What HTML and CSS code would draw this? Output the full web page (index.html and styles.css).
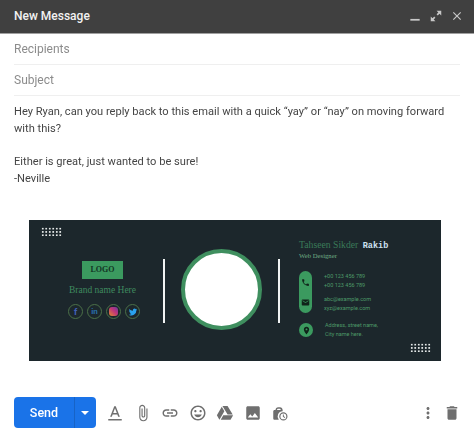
FILE: index.html

```html
<!DOCTYPE html>
<html lang="en">
<head>
  <meta charset="UTF-8" />
  <title>New Message</title>
  <link rel="stylesheet" href="styles.css">
</head>
<body>
  <div class="compose">
    <header class="title-bar">
      <span class="title">New Message</span>
      <div class="window-icons">
        <svg viewBox="0 0 24 24"><path d="M4 17h16v3H4z"/></svg>
        <svg viewBox="0 0 24 24"><path d="M21 3v8l-3-3-3 3-2-2 3-3-3-3zM3 21v-8l3 3 3-3 2 2-3 3 3 3z"/></svg>
        <svg viewBox="0 0 24 24"><path d="M19 6.41L17.59 5 12 10.59 6.41 5 5 6.41 10.59 12 5 17.59 6.41 19 12 13.41 17.59 19 19 17.59 13.41 12z"/></svg>
      </div>
    </header>

    <div class="field">Recipients</div>
    <div class="field">Subject</div>

    <div class="message">
      <p>Hey Ryan, can you reply back to this email with a quick “yay” or “nay” on moving forward with this?</p>
      <p>Either is great, just wanted to be sure!<br>-Neville</p>
    </div>

    <div class="signature">
      <span class="dots dots-top"></span>
      <div class="brand">
        <div class="logo">LOGO</div>
        <div class="brand-name">Brand name Here</div>
        <div class="socials">
          <span class="social fb">f</span>
          <span class="social in">in</span>
          <span class="social ig"></span>
          <span class="social tw">
            <svg viewBox="0 0 24 24"><path d="M22 5.9c-.7.3-1.500.5-2.400.6.9-.5 1.500-1.300 1.800-2.300-.8.5-1.700.8-2.600 1a4.100 4.100 0 0 0-7 3.700C8.400 8.800 5.400 7.200 3.400 4.700a4.100 4.100 0 0 0 1.300 5.500c-.7 0-1.300-.2-1.900-.5 0 2 1.400 3.700 3.300 4.100-.6.2-1.200.2-1.800.1.500 1.600 2 2.800 3.800 2.800A8.200 8.200 0 0 1 2 18.400 11.600 11.600 0 0 0 20 8.100c.8-.6 1.500-1.300 2-2.200z"/></svg>
          </span>
        </div>
      </div>
      <span class="rule"></span>
      <div class="photo"></div>
      <span class="rule"></span>
      <div class="person">
        <div class="name">Tahseen Sikder <b>Rakib</b></div>
        <div class="job">Web Designer</div>
        <div class="contact">
          <div class="pill">
            <svg viewBox="0 0 24 24"><path d="M6.620 10.790c1.440 2.830 3.760 5.140 6.590 6.590l2.200-2.200c.27-.27.67-.36 1.020-.24 1.120.37 2.330.57 3.570.57.55 0 1 .45 1 1V20c0 .55-.45 1-1 1-9.390 0-17-7.610-17-17 0-.55.45-1 1-1h3.500c.55 0 1 .45 1 1 0 1.250.2 2.450.57 3.570.11.35.03.74-.25 1.020l-2.200 2.200z"/></svg>
            <svg viewBox="0 0 24 24"><path d="M20 4H4c-1.100 0-2 .9-2 2v12c0 1.100.9 2 2 2h16c1.100 0 2-.9 2-2V6c0-1.100-.9-2-2-2zm0 4l-8 5-8-5V6l8 5 8-5v2z"/></svg>
          </div>
          <div class="contact-text">
            <p>+00 123 456 789<br>+00 123 456 789</p>
            <p>abc@example.com<br>xyz@example.com</p>
          </div>
        </div>
        <div class="contact address">
          <div class="pin">
            <svg viewBox="0 0 24 24"><path d="M12 2C8.130 2 5 5.130 5 9c0 5.250 7 13 7 13s7-7.750 7-13c0-3.870-3.130-7-7-7zm0 9.500c-1.380 0-2.500-1.120-2.500-2.500s1.120-2.500 2.500-2.500 2.500 1.120 2.500 2.500-1.120 2.500-2.500 2.500z"/></svg>
          </div>
          <div class="contact-text">Address, street name,<br>City name here.</div>
        </div>
      </div>
      <span class="dots dots-bottom"></span>
    </div>

    <footer class="toolbar">
      <div class="send">
        <span class="send-label">Send</span>
        <span class="send-more"></span>
      </div>
      <div class="tools">
        <svg viewBox="0 0 24 24"><path d="M11 3L5.500 17h2.250l1.120-3h6.250l1.120 3h2.250L13 3h-2zm-1.380 9L12 5.670 14.380 12H9.620zM3 20h18v2H3z"/></svg>
        <svg viewBox="0 0 24 24"><path d="M16.500 6v11.500c0 2.210-1.790 4-4 4s-4-1.790-4-4V5c0-1.380 1.120-2.500 2.500-2.500s2.500 1.120 2.500 2.500v10.500c0 .55-.45 1-1 1s-1-.45-1-1V6H10v9.500c0 1.380 1.120 2.500 2.500 2.500s2.500-1.120 2.500-2.500V5c0-2.210-1.790-4-4-4S7 2.790 7 5v12.500c0 3.040 2.460 5.500 5.500 5.500s5.500-2.460 5.500-5.500V6h-1.500z"/></svg>
        <svg viewBox="0 0 24 24"><path d="M3.900 12c0-1.710 1.390-3.100 3.100-3.100h4V7H7c-2.760 0-5 2.240-5 5s2.240 5 5 5h4v-1.900H7c-1.710 0-3.100-1.390-3.100-3.100zM8 13h8v-2H8v2zm9-6h-4v1.900h4c1.710 0 3.100 1.390 3.100 3.100s-1.390 3.100-3.100 3.100h-4V17h4c2.760 0 5-2.240 5-5s-2.240-5-5-5z"/></svg>
        <svg viewBox="0 0 24 24"><path d="M11.990 2C6.470 2 2 6.480 2 12s4.470 10 9.990 10C17.520 22 22 17.520 22 12S17.520 2 11.990 2zM12 20c-4.420 0-8-3.580-8-8s3.580-8 8-8 8 3.580 8 8-3.580 8-8 8zm3.500-9c.83 0 1.500-.67 1.500-1.500S16.330 8 15.500 8 14 8.670 14 9.500s.67 1.500 1.500 1.500zm-7 0c.83 0 1.500-.67 1.500-1.500S9.330 8 8.500 8 7 8.670 7 9.500 7.670 11 8.500 11zm3.500 6.500c2.330 0 4.310-1.460 5.110-3.500H6.890c.8 2.040 2.780 3.500 5.110 3.500z"/></svg>
        <svg viewBox="0 0 24 24"><path d="M7.710 3.500L1.150 15l3.430 6 6.550-11.500zM9.730 15L6.300 21h13.120l3.430-6zM22.280 14L15.420 2.500H8.570L15.430 14z"/></svg>
        <svg viewBox="0 0 24 24"><path d="M21 19V5c0-1.100-.9-2-2-2H5c-1.100 0-2 .9-2 2v14c0 1.100.9 2 2 2h14c1.100 0 2-.9 2-2zM8.500 13.500l2.500 3.010L14.500 12l4.500 6H5l3.500-4.500z"/></svg>
        <svg viewBox="0 0 24 24"><path d="M15.500 9.600V8c0-2-1.600-3.600-3.500-3.600H9.500C7.600 4.400 6 6 6 8H4.800C3.800 8 3 8.800 3 9.800v9.400c0 1 .8 1.800 1.800 1.800h5.600a7 7 0 0 1 5.100-11.400zM8 8c0-1 .8-1.700 1.700-1.700h1.600c.9 0 1.700.7 1.700 1.700zM16.500 11a5.500 5.500 0 1 0 0 11 5.500 5.500 0 0 0 0-11zm0 9.400a3.900 3.900 0 1 1 0-7.800 3.900 3.900 0 0 1 0 7.800zm.6-6.500h-1.300v3.100l2.600 1.500.6-1-1.900-1.100z"/></svg>
      </div>
      <div class="tools tools-right">
        <svg viewBox="0 0 24 24"><path d="M12 8c1.100 0 2-.9 2-2s-.9-2-2-2-2 .9-2 2 .9 2 2 2zm0 2c-1.100 0-2 .9-2 2s.9 2 2 2 2-.9 2-2-.9-2-2-2zm0 6c-1.100 0-2 .9-2 2s.9 2 2 2 2-.9 2-2-.9-2-2-2z"/></svg>
        <svg viewBox="0 0 24 24"><path d="M6 19c0 1.100.9 2 2 2h8c1.100 0 2-.9 2-2V7H6v12zM19 4h-3.500l-1-1h-5l-1 1H5v2h14V4z"/></svg>
      </div>
    </footer>
  </div>
</body>
</html>
```

FILE: styles.css

```css
* { box-sizing: border-box; margin: 0; padding: 0; }
body { background-color: #fff; font-family: Roboto, Arial, sans-serif; color: #444; }
svg { display: block; fill: currentColor; }

.compose {
  display: flex;
  flex-direction: column;
  height: 438px;
  overflow: hidden;
  filter: blur(0.4px);
}

.title-bar {
  display: flex;
  justify-content: space-between;
  align-items: center;
  height: 34px;
  padding: 0 10px 2px 14px;
  background-color: #404040;
  border-bottom: 1px solid #a0a0a0;
  color: #f2f2f2;
}
.title { font-size: 12px; font-weight: 500; }
.window-icons { display: flex; gap: 7px; color: #c8c8c8; }
.window-icons svg { width: 14px; height: 14px; }

.field {
  height: 31px;
  margin: 0 14px;
  padding-top: 8px;
  border-bottom: 1px solid #efefef;
  font-size: 12px;
  color: #8c8c8c;
}

.message {
  padding: 8px 14px 0;
  font-size: 11.1px;
  line-height: 16.7px;
  color: #454545;
}
.message p { margin-bottom: 16.7px; }

.signature {
  position: relative;
  display: flex;
  align-items: center;
  width: 412px;
  height: 141px;
  margin: 16px 0 0 29px;
  background-color: #1c272c;
  flex-shrink: 0;
}
.dots {
  position: absolute;
  width: 21px;
  height: 10px;
  background-image: radial-gradient(circle, #e4e8e8 0.9px, transparent 1.1px);
  background-size: 3.5px 3.3px;
}
.dots-top { top: 7px; left: 12px; }
.dots-bottom { bottom: 8px; right: 10px; }

.brand {
  display: flex;
  flex-direction: column;
  align-items: center;
  width: 134px;
  padding-left: 13px;
  margin-top: -1px;
}
.logo {
  width: 41px;
  height: 18px;
  background-color: #3b9a5f;
  font-family: "Liberation Serif", serif;
  font-size: 8px;
  font-weight: bold;
  line-height: 18px;
  text-align: center;
  color: #123524;
}
.brand-name {
  margin-top: 6px;
  font-family: "Liberation Serif", serif;
  font-size: 9.5px;
  color: #3f8a5f;
}
.socials { display: flex; gap: 4px; margin: 9px 0 0 3px; }
.social {
  display: flex;
  justify-content: center;
  align-items: center;
  width: 15px;
  height: 15px;
  border: 1px solid #4b7048;
  border-radius: 50%;
  font-size: 8px;
  font-weight: bold;
}
.fb { color: #4360b8; font-size: 9px; }
.in { color: #2a6fa8; }
.ig::after {
  content: "";
  width: 9px;
  height: 9px;
  border-radius: 3px;
  background: linear-gradient(45deg, #e08a2e, #c0357a 55%, #6a3aa0);
}
.tw { color: #2aa3ee; }
.tw svg { width: 10px; height: 10px; }

.rule {
  width: 2px;
  height: 64px;
  background-color: #f0f3f3;
  flex-shrink: 0;
}

.photo {
  width: 81px;
  height: 81px;
  margin: -3px 16px 0 16px;
  background-color: #fff;
  border: 4px solid #3f8f5f;
  border-radius: 50%;
  flex-shrink: 0;
}

.person { align-self: flex-start; margin-left: 19px; padding-top: 19px; }
.name {
  font-family: "Liberation Serif", serif;
  font-size: 9.7px;
  color: #3a7a58;
  white-space: nowrap;
}
.name b {
  margin-left: 2px;
  font-family: "Liberation Mono", monospace;
  font-size: 8.5px;
  color: #cfe2f2;
}
.job {
  margin-top: 1px;
  font-family: "Liberation Serif", serif;
  font-size: 6.7px;
  color: #6fae85;
}
.contact {
  display: flex;
  align-items: center;
  gap: 12px;
  margin-top: 12px;
  font-size: 5.5px;
  color: #4d9a68;
}
.contact.address { margin-top: 8px; }
.contact-text { line-height: 9px; white-space: nowrap; }
.contact-text p + p { margin-top: 5px; }
.pill {
  display: flex;
  flex-direction: column;
  justify-content: space-between;
  align-items: center;
  width: 13px;
  height: 42px;
  padding: 7px 0 6px;
  background-color: #3b9a5f;
  border-radius: 7px;
  color: #10231a;
}
.pill svg { width: 9px; height: 9px; }
.pin {
  display: flex;
  justify-content: center;
  align-items: center;
  width: 14px;
  height: 14px;
  background-color: #3b9a5f;
  border-radius: 50%;
  color: #10231a;
}
.pin svg { width: 9px; height: 9px; }

.toolbar {
  display: flex;
  align-items: center;
  margin-top: 36px;
  padding: 0 13px 0 14px;
}
.send {
  display: flex;
  width: 82px;
  height: 31px;
  background-color: #1a73e8;
  border-radius: 4px;
  color: #fff;
}
.send-label {
  width: 61px;
  font-size: 12.5px;
  font-weight: 500;
  line-height: 31px;
  text-align: center;
  border-right: 1px solid #1763c6;
}
.send-more {
  display: block;
  width: 0;
  height: 0;
  margin: 14px 0 0 6px;
  border: 4px solid transparent;
  border-top-color: #fff;
  border-bottom: 0;
}
.tools {
  display: flex;
  gap: 9.5px;
  margin-left: 10px;
  color: #6f6f6f;
}
.tools svg { width: 18px; height: 18px; }
.tools-right { margin-left: auto; gap: 6px; }
```
